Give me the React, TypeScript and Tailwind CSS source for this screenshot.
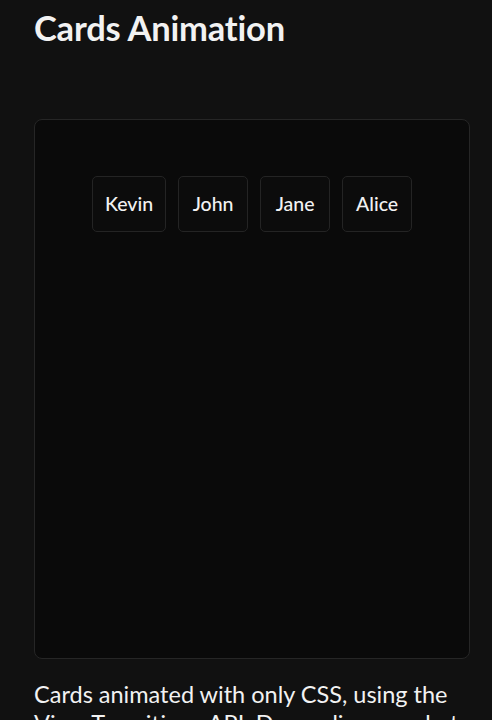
import React from "react";

export default function App() {
  const names = ["Kevin", "John", "Jane", "Alice"];
  return (
    <div className="min-h-[720px] w-full bg-[#111111] text-[#f2f2f2] pl-[34px] pr-[22px] pt-[6px]" style={{ fontFamily: "Lato, 'Noto Sans', sans-serif" }}>
      <h1 className="text-[34.5px] font-bold leading-[44px] tracking-[-0.2px]">Cards Animation</h1>
      <div className="mt-[69px] h-[540px] rounded-[8px] border border-[#262626] bg-[#0a0a0a] pt-[56px]">
        <div className="flex justify-center gap-[12px]">
          {names.map((n) => (
            <div key={n} className="flex h-[56px] min-w-[70px] items-center justify-center rounded-[5px] border border-[#242424] bg-[#0c0c0c] px-[12px] text-[19.5px] font-medium">
              {n}
            </div>
          ))}
        </div>
      </div>
      <p className="mt-[21px] text-[23.5px] leading-[29px]">
        Cards animated with only CSS, using the View Transitions API. Depending on what you click, the cards move around.
      </p>
    </div>
  );
}
